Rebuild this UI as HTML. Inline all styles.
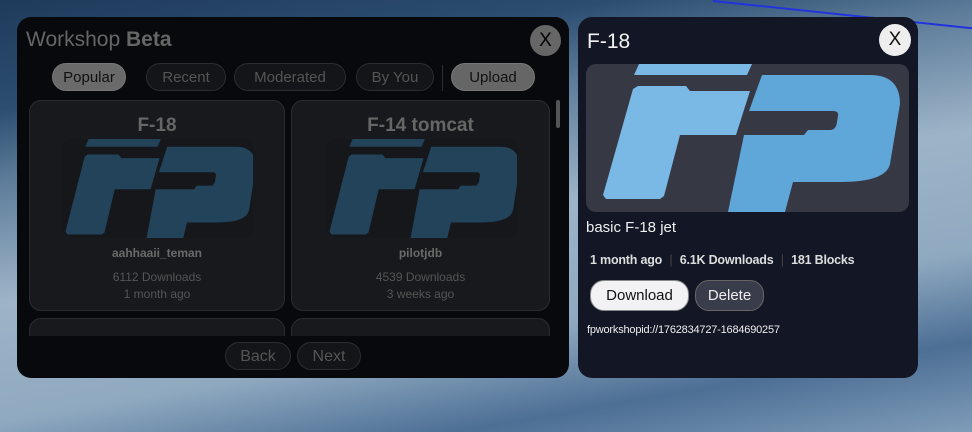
<!DOCTYPE html>
<html><head><style>
*{margin:0;padding:0;box-sizing:border-box}
body{width:972px;height:432px;overflow:hidden;font-family:"Liberation Sans",sans-serif;position:relative;
background:linear-gradient(170deg,#1f3b5c 0%,#2c4d70 18%,#5d7c9a 30%,#9db4c8 50%,#8fa9c0 70%,#4d6f95 85%,#7f9cb8 100%);}
.abs{position:absolute}
.panel{position:absolute;border-radius:14px}
.pill{position:absolute;height:28px;border-radius:14px;font-size:16px;line-height:28px;text-align:center}
.card{position:absolute;background:#17191d;border:1px solid #2a2c30;border-radius:12px}
.ct{position:absolute;width:100%;text-align:center}
</style></head><body>
<div class="abs" style="left:713px;top:0px;width:270px;height:2px;background:#2233dd;transform:rotate(6deg);transform-origin:0 0"></div>

<div class="panel" style="left:17px;top:17px;width:552px;height:361px;background:#08090c"></div>
<div class="abs" style="left:26px;top:28px;font-size:21px;color:#666">Workshop <b>Beta</b></div>
<div class="abs" style="left:530px;top:25px;width:31px;height:31px;border-radius:50%;background:#666;color:#000;font-size:19px;text-align:center;line-height:31px">X</div>

<div class="pill" style="left:52px;top:63px;width:74px;background:#6a6a6a;color:#111;border:1px solid #777;font-size:15px">Popular</div>
<div class="pill" style="left:146px;top:63px;width:80px;background:#141518;border:1px solid #2c2d31;color:#555;font-size:15px">Recent</div>
<div class="pill" style="left:234px;top:63px;width:112px;background:#141518;border:1px solid #2c2d31;color:#555;font-size:15px">Moderated</div>
<div class="pill" style="left:356px;top:63px;width:78px;background:#141518;border:1px solid #2c2d31;color:#555;font-size:15px">By You</div>
<div class="abs" style="left:442px;top:65px;width:1px;height:26px;background:#2c2d31"></div>
<div class="pill" style="left:451px;top:63px;width:84px;background:#666;color:#111;border:1px solid #777;font-size:15px">Upload</div>
<div class="abs" style="left:556px;top:100px;width:4px;height:28px;background:#555;border-radius:2px"></div>

<div class="card" style="left:29px;top:100px;width:256px;height:211px">
 <div class="ct" style="top:14px;font-size:19px;font-weight:bold;color:#666">F-18</div>
 <svg class="abs" style="left:31px;top:38px" width="192" height="99"><rect width="192" height="99" rx="10" fill="#15171b"/><svg viewBox="10 0 300 140" preserveAspectRatio="none" width="192" height="99"><path fill="#22435a" d="M53,0L166,0L161,11L48,11Z M52,22L100,22L104,27L164,27L150,71L94,71L78,132L74,135L20,135L17,131L47,25Z M176,11L284,11Q314,11 314,40L304,100Q300,118 254,118L207,118L199,148L142,148L158,71L218,71L222,66L244,66Q250,66 251,58L252,52Q253,47 247,47L163,47Z"/></svg></svg>
 <div class="ct" style="top:145px;font-size:12px;font-weight:bold;color:#6a6a6a">aahhaaii_teman</div>
 <div class="ct" style="top:169px;font-size:12px;color:#555">6112 Downloads</div>
 <div class="ct" style="top:186px;font-size:12px;color:#555">1 month ago</div>
</div>
<div class="card" style="left:291px;top:100px;width:259px;height:211px">
 <div class="ct" style="top:14px;font-size:19px;font-weight:bold;color:#666">F-14 tomcat</div>
 <svg class="abs" style="left:33px;top:38px" width="192" height="99"><rect width="192" height="99" rx="10" fill="#15171b"/><svg viewBox="10 0 300 140" preserveAspectRatio="none" width="192" height="99"><path fill="#22435a" d="M53,0L166,0L161,11L48,11Z M52,22L100,22L104,27L164,27L150,71L94,71L78,132L74,135L20,135L17,131L47,25Z M176,11L284,11Q314,11 314,40L304,100Q300,118 254,118L207,118L199,148L142,148L158,71L218,71L222,66L244,66Q250,66 251,58L252,52Q253,47 247,47L163,47Z"/></svg></svg>
 <div class="ct" style="top:145px;font-size:12px;font-weight:bold;color:#6a6a6a">pilotjdb</div>
 <div class="ct" style="top:169px;font-size:12px;color:#555">4539 Downloads</div>
 <div class="ct" style="top:186px;font-size:12px;color:#555">3 weeks ago</div>
</div>
<div class="card" style="left:29px;top:318px;width:256px;height:18px;border-bottom:none;border-radius:12px 12px 0 0"></div>
<div class="card" style="left:291px;top:318px;width:259px;height:18px;border-bottom:none;border-radius:12px 12px 0 0"></div>
<div class="pill" style="left:225px;top:342px;width:66px;background:#141518;border:1px solid #2c2d31;color:#555">Back</div>
<div class="pill" style="left:297px;top:342px;width:64px;background:#141518;border:1px solid #2c2d31;color:#555">Next</div>

<div class="panel" style="left:578px;top:17px;width:340px;height:361px;background:#131725"></div>
<div class="abs" style="left:587px;top:30px;font-size:21px;color:#f2f2f2">F-18</div>
<div class="abs" style="left:879px;top:24px;width:32px;height:32px;border-radius:50%;background:#eee;color:#111;font-size:19px;text-align:center;line-height:32px">X</div>
<svg class="abs" style="left:586px;top:64px" width="323" height="148"><rect width="323" height="148" rx="10" fill="#363944"/><path fill="#7ab8e5" d="M53,0L166,0L161,11L48,11Z M52,22L100,22L104,27L164,27L150,71L94,71L78,132L74,135L20,135L17,131L47,25Z"/><path fill="#5fa6d9" d="M176,11L284,11Q314,11 314,40L304,100Q300,118 254,118L207,118L199,148L142,148L158,71L218,71L222,66L244,66Q250,66 251,58L252,52Q253,47 247,47L163,47Z"/></svg>
<div class="abs" style="left:586px;top:219px;font-size:15px;color:#f0f0f0">basic F-18 jet</div>
<div class="abs" style="left:590px;top:253px;font-size:12.5px;font-weight:bold;color:#ddd;white-space:nowrap;letter-spacing:-0.2px">1 month ago <span style="color:#444;font-weight:normal;margin:0 4px">|</span> 6.1K Downloads <span style="color:#444;font-weight:normal;margin:0 4px">|</span> 181 Blocks</div>
<div class="pill" style="left:590px;top:280px;width:99px;height:31px;line-height:29px;background:#f2f2f4;color:#111;border:1px solid #888;font-size:15px">Download</div>
<div class="pill" style="left:695px;top:280px;width:69px;height:31px;line-height:29px;background:#393c4a;color:#eee;border:1px solid #666;font-size:15px">Delete</div>
<div class="abs" style="left:587px;top:324px;font-size:11px;color:#eee;letter-spacing:-0.2px">fpworkshopid://1762834727-1684690257</div>
</body></html>
